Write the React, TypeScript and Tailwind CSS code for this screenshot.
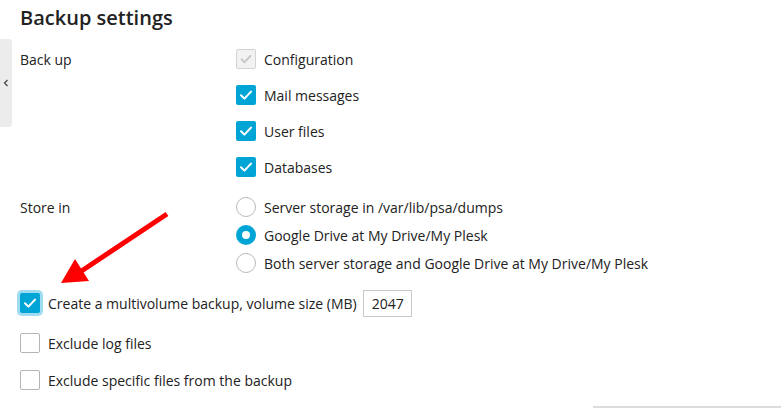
import React from 'react';

const BLUE = 'bg-[#00a5d6]';

const Check = ({ color = 'white' }: { color?: string }) => (
  <svg width="20" height="20" viewBox="0 0 20 20" fill="none">
    <path d="M5 10.2 L8.4 13.6 L15 6.6" stroke={color} strokeWidth="2" strokeLinecap="round" strokeLinejoin="round" />
  </svg>
);

const Checkbox: React.FC<{ checked?: boolean; disabled?: boolean; focused?: boolean }> = ({ checked, disabled, focused }) => {
  if (disabled) {
    return (
      <span className="w-5 h-5 rounded-[2px] border border-[#d3d3d3] bg-[#f2f2f2] flex items-center justify-center shrink-0">
        <Check color="#c4c4c4" />
      </span>
    );
  }
  if (checked) {
    return (
      <span className={`w-5 h-5 rounded-[2px] ${BLUE} flex items-center justify-center shrink-0 ${focused ? 'ring-[3px] ring-[#9fdcf1]' : ''}`}>
        <Check />
      </span>
    );
  }
  return <span className="w-5 h-5 rounded-[2px] border border-[#b5b5b5] bg-white shrink-0" />;
};

const Radio: React.FC<{ checked?: boolean }> = ({ checked }) =>
  checked ? (
    <span className={`w-5 h-5 rounded-full ${BLUE} flex items-center justify-center shrink-0`}>
      <span className="w-[8px] h-[8px] rounded-full bg-white" />
    </span>
  ) : (
    <span className="w-5 h-5 rounded-full border border-[#b9b9b9] bg-white shrink-0" />
  );

const App: React.FC = () => {
  const backups = [
    { label: 'Configuration', disabled: true },
    { label: 'Mail messages' },
    { label: 'User files' },
    { label: 'Databases' },
  ];
  const stores = [
    { label: 'Server storage in /var/lib/psa/dumps' },
    { label: 'Google Drive at My Drive/My Plesk', checked: true },
    { label: 'Both server storage and Google Drive at My Drive/My Plesk' },
  ];

  return (
    <div
      className="relative w-[781px] h-[408px] bg-white overflow-hidden text-[#222] text-[14px]"
      style={{ fontFamily: '"Open Sans", "Noto Sans", sans-serif' }}
    >
      {/* collapsed side tab */}
      <div className="absolute left-0 top-[39px] w-[12px] h-[88px] bg-[#ececec] rounded-r-[3px] flex items-center justify-center">
        <svg width="6" height="8" viewBox="0 0 6 8" fill="none">
          <path d="M4.5 1 L1.5 4 L4.5 7" stroke="#444" strokeWidth="1.2" />
        </svg>
      </div>

      <div className="pl-5">
        <h1 className="pt-[4px] h-[32px] text-[20px] leading-[28px] font-semibold text-[#222]">Backup settings</h1>

        {/* Back up */}
        <div className="flex mt-[9px]">
          <div className="w-[216px] h-[36px] flex items-center">Back up</div>
          <div className="flex flex-col">
            {backups.map((b) => (
              <label key={b.label} className="h-[36px] flex items-center gap-2">
                <Checkbox checked={!b.disabled} disabled={b.disabled} />
                <span>{b.label}</span>
              </label>
            ))}
          </div>
        </div>

        {/* Store in */}
        <div className="flex mt-[8px]">
          <div className="w-[216px] h-[28px] flex items-center">Store in</div>
          <div className="flex flex-col">
            {stores.map((s) => (
              <label key={s.label} className="h-[28px] flex items-center gap-2">
                <Radio checked={s.checked} />
                <span>{s.label}</span>
              </label>
            ))}
          </div>
        </div>

        <label className="mt-[12px] h-[28px] flex items-center gap-2">
          <Checkbox checked focused />
          <span>Create a multivolume backup, volume size (MB)</span>
          <span className="ml-[-2px] w-[49px] h-[27px] border border-[#c9c9c9] flex items-center pl-[8px]">2047</span>
        </label>
        <label className="mt-[12px] h-[28px] flex items-center gap-2">
          <Checkbox />
          <span>Exclude log files</span>
        </label>
        <label className="mt-[9px] h-[28px] flex items-center gap-2">
          <Checkbox />
          <span>Exclude specific files from the backup</span>
        </label>
      </div>

      {/* bottom edge of next panel */}
      <div className="absolute left-[593px] right-0 bottom-0 h-[2px] bg-[#dcdcdc]" />

      {/* annotation arrow */}
      <svg className="absolute left-0 top-0 pointer-events-none" width="781" height="408">
        <line x1="167" y1="214" x2="80" y2="272" stroke="#ff0000" strokeWidth="5" />
        <polygon points="61,283 75,259 89,281" fill="#ff0000" />
      </svg>
    </div>
  );
};

export default App;
